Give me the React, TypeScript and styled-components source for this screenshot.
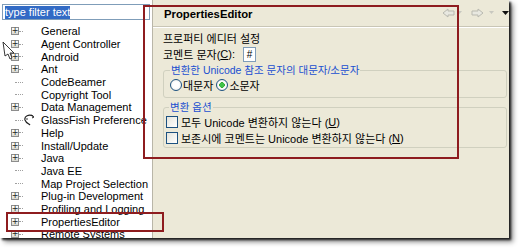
import React from "react";
import styled, { createGlobalStyle } from "styled-components";

const GlobalStyle = createGlobalStyle`
	html, body {
		margin: 0;
		padding: 0;
		background: #fff;
	}
	body {
		font-family: "Liberation Sans", "Noto Sans CJK KR", sans-serif;
		color: #000;
	}
`;

const Stage = styled.div`
	position: relative;
	width: 520px;
	height: 250px;
	overflow: hidden;
	background: #fff;
`;

const Window = styled.div`
	display: flex;
	width: 509px;
	height: 238px;
	background: #ece9d8;
	box-shadow: 2px 2px 2px rgba(0, 0, 0, 0.8), 4px 4px 5px rgba(0, 0, 0, 0.45);
`;

// 왼쪽 트리
const TreePane = styled.div`
	width: 153px;
	flex-shrink: 0;
	box-sizing: border-box;
	background: #fff;
	border-right: 1px solid #b9b6a8;
	padding: 4px 0 0 2px;
	overflow: hidden;
`;

const FilterBox = styled.div`
	height: 16px;
	box-sizing: border-box;
	border: 1px solid #7f9db9;
	display: flex;
	align-items: center;
	padding-left: 2px;
	margin-right: 2px;
`;

const Selected = styled.span`
	background: #316ac5;
	color: #fff;
	font-size: 11px;
	line-height: 13px;
`;

const TreeList = styled.ul`
	list-style: none;
	margin: 5px 0 0;
	padding: 0;
`;

const TreeRow = styled.li`
	display: flex;
	align-items: center;
	height: 12.69px;
	font-size: 11px;
	white-space: nowrap;
`;

const Gutter = styled.span`
	width: 39px;
	flex-shrink: 0;
	display: flex;
	align-items: center;
	padding-left: 9px;
	box-sizing: border-box;
`;

const Expander = styled.span`
	width: 8px;
	height: 8px;
	box-sizing: border-box;
	border: 1px solid #8d8d8d;
	background: linear-gradient(#fff, #d8d8d0);
	display: flex;
	align-items: center;
	justify-content: center;
	font-size: 8px;
	line-height: 6px;
	color: #222;
	font-family: "DejaVu Sans", sans-serif;
`;

const Stub = styled.span<{ $leaf?: boolean }>`
	width: ${(p) => (p.$leaf ? 8 : 4)}px;
	margin-left: ${(p) => (p.$leaf ? 4 : 0)}px;
	border-top: 1px dotted #a0a0a0;
`;

// 오른쪽 페이지
const Page = styled.div`
	flex: 1;
	display: flex;
	flex-direction: column;
	min-width: 0;
`;

const Header = styled.div`
	height: 27px;
	box-sizing: border-box;
	padding: 2px 0 0 11px;
	display: flex;
	align-items: center;
	justify-content: space-between;
	border-bottom: 1px solid #c9c6b6;
	box-shadow: 0 1px 0 #fff;
`;

const Title = styled.div`
	font-weight: bold;
	font-size: 11.3px;
`;

const NavBar = styled.div`
	display: flex;
	align-items: center;
	padding-bottom: 3px;
`;

const Spacer = styled.span<{ $w: number }>`
	width: ${(p) => p.$w}px;
`;

const Body = styled.div`
	padding: 3px 2px 0 10px;
	display: flex;
	flex-direction: column;
	font-size: 11px;
`;

const Line = styled.div`
	height: 16px;
	display: flex;
	align-items: center;
	white-space: nowrap;
`;

const CharBox = styled.span`
	width: 13px;
	height: 15px;
	box-sizing: border-box;
	margin-left: 8px;
	border: 1px solid #7f9db9;
	background: #fff;
	display: flex;
	align-items: center;
	justify-content: center;
	font-size: 10px;
`;

const Group = styled.fieldset<{ $pad: number; $top: number; $left: number }>`
	margin: ${(p) => p.$top}px 0 0;
	padding: 0 0 ${(p) => p.$pad}px ${(p) => p.$left}px;
	border: 1px solid #d0d0bf;
	border-radius: 3px;
	min-width: 0;
`;

const Legend = styled.legend<{ $shift?: number }>`
	color: #1a4fd0;
	padding: 0 1px;
	margin-left: ${(p) => p.$shift || 0}px;
	font-size: 10.5px;
	line-height: 14px;
`;

const Radio = styled.span<{ $checked?: boolean }>`
	width: 12px;
	height: 12px;
	box-sizing: border-box;
	border-radius: 50%;
	border: 1px solid #1c5180;
	background: ${(p) =>
		p.$checked
			? "radial-gradient(circle, #3fc24a 0 2px, #21a121 2.5px, #fff 3px, #e6e6e0 100%)"
			: "radial-gradient(circle, #fff 40%, #e6e6e0 100%)"};
	margin-right: 1px;
`;

const Check = styled.span`
	width: 12px;
	height: 12px;
	box-sizing: border-box;
	border: 1px solid #1c5180;
	background: linear-gradient(135deg, #e4e4dc, #fff);
	margin-right: 3px;
`;

const Key = styled.span`
	text-decoration: underline;
`;

const Annotation = styled.div<{ $x: number; $y: number; $w: number; $h: number }>`
	position: absolute;
	left: ${(p) => p.$x}px;
	top: ${(p) => p.$y}px;
	width: ${(p) => p.$w}px;
	height: ${(p) => p.$h}px;
	box-sizing: border-box;
	border: 2px solid #8e1c1f;
	pointer-events: none;
`;

const Cursor = styled.svg`
	position: absolute;
	left: 2px;
	top: 41px;
`;

interface Node {
	name: string;
	leaf?: boolean;
	fish?: boolean;
}

const nodes: Node[] = [
	{ name: "General" },
	{ name: "Agent Controller" },
	{ name: "Android" },
	{ name: "Ant" },
	{ name: "CodeBeamer", leaf: true },
	{ name: "Copyright Tool", leaf: true },
	{ name: "Data Management" },
	{ name: "GlassFish Preference", leaf: true, fish: true },
	{ name: "Help" },
	{ name: "Install/Update" },
	{ name: "Java" },
	{ name: "Java EE", leaf: true },
	{ name: "Map Project Selection", leaf: true },
	{ name: "Plug-in Development" },
	{ name: "Profiling and Logging" },
	{ name: "PropertiesEditor" },
	{ name: "Remote Systems" },
];

const FishIcon = () => (
	<svg width="14" height="12" viewBox="0 0 14 12" style={{ marginLeft: -2 }}>
		<path d="M12 2 C8 0, 3 2, 4 6 C5 9, 8 10, 9 11" fill="none" stroke="#222" strokeWidth="1.2" />
		<path d="M10 1 L13 3 L11 4" fill="none" stroke="#222" strokeWidth="1" />
		<circle cx="6" cy="5" r="0.8" fill="#222" />
	</svg>
);

const ArrowIcon = ({ dir }: { dir: "left" | "right" }) => (
	<svg width="13" height="10" viewBox="0 0 13 10">
		<g transform={dir === "right" ? "translate(13,0) scale(-1,1)" : undefined}>
			<path d="M1 5 L6 1 L6 3 L12 3 L12 7 L6 7 L6 9 Z" fill="#e8e8e0" stroke="#b9b9b0" strokeWidth="1" />
		</g>
	</svg>
);

const DropTri = ({ dark }: { dark?: boolean }) => (
	<svg width={dark ? 7 : 5} height="4" viewBox={dark ? "0 0 7 4" : "0 0 5 4"}>
		<path d={dark ? "M0 0 L7 0 L3.5 4 Z" : "M0 0 L5 0 L2.5 3 Z"} fill={dark ? "#111" : "#c8c8c0"} />
	</svg>
);

const App: React.FC = () => {
	return (
		<Stage>
			<GlobalStyle />
			<Window>
				<TreePane>
					<FilterBox>
						<Selected>type filter text</Selected>
					</FilterBox>
					<TreeList>
						{nodes.map((n) => (
							<TreeRow key={n.name}>
								<Gutter>
									{n.leaf ? (
										<>
											<Stub $leaf />
											{n.fish && <FishIcon />}
										</>
									) : (
										<>
											<Expander>+</Expander>
											<Stub />
										</>
									)}
								</Gutter>
								{n.name}
							</TreeRow>
						))}
					</TreeList>
				</TreePane>
				<Page>
					<Header>
						<Title>PropertiesEditor</Title>
						<NavBar>
							<ArrowIcon dir="left" />
							<Spacer $w={2} />
							<DropTri />
							<Spacer $w={9} />
							<ArrowIcon dir="right" />
							<Spacer $w={5} />
							<DropTri />
							<Spacer $w={8} />
							<DropTri dark />
						</NavBar>
					</Header>
					<Body>
						<Line>프로퍼티 에디터 설정</Line>
						<Line>
							코멘트 문자(<Key>C</Key>):
							<CharBox>#</CharBox>
						</Line>
						<Group $top={1} $pad={4} $left={6}>
							<Legend>변환한 Unicode 참조 문자의 대문자/소문자</Legend>
							<Line>
								<Radio />
								대문자
								<Spacer $w={3} />
								<Radio $checked />
								소문자
							</Line>
						</Group>
						<Group $top={2} $pad={1} $left={2}>
							<Legend $shift={3}>변환 옵션</Legend>
							<Line>
								<Check />
								모두 Unicode 변환하지 않는다 (<Key>U</Key>)
							</Line>
							<Line>
								<Check />
								보존시에 코멘트는 Unicode 변환하지 않는다 (<Key>N</Key>)
							</Line>
						</Group>
					</Body>
				</Page>
			</Window>
			<Annotation $x={143} $y={5} $w={316} $h={154} />
			<Annotation $x={6} $y={212} $w={158} $h={20} />
			<Cursor width="14" height="20" viewBox="0 0 14 20">
				<path d="M1 1 L12 12 L8 12 L10 17 L8 18 L6 13 L3 15 Z" fill="#fff" stroke="#222" strokeWidth="0.9" />
			</Cursor>
		</Stage>
	);
};

export default App;
